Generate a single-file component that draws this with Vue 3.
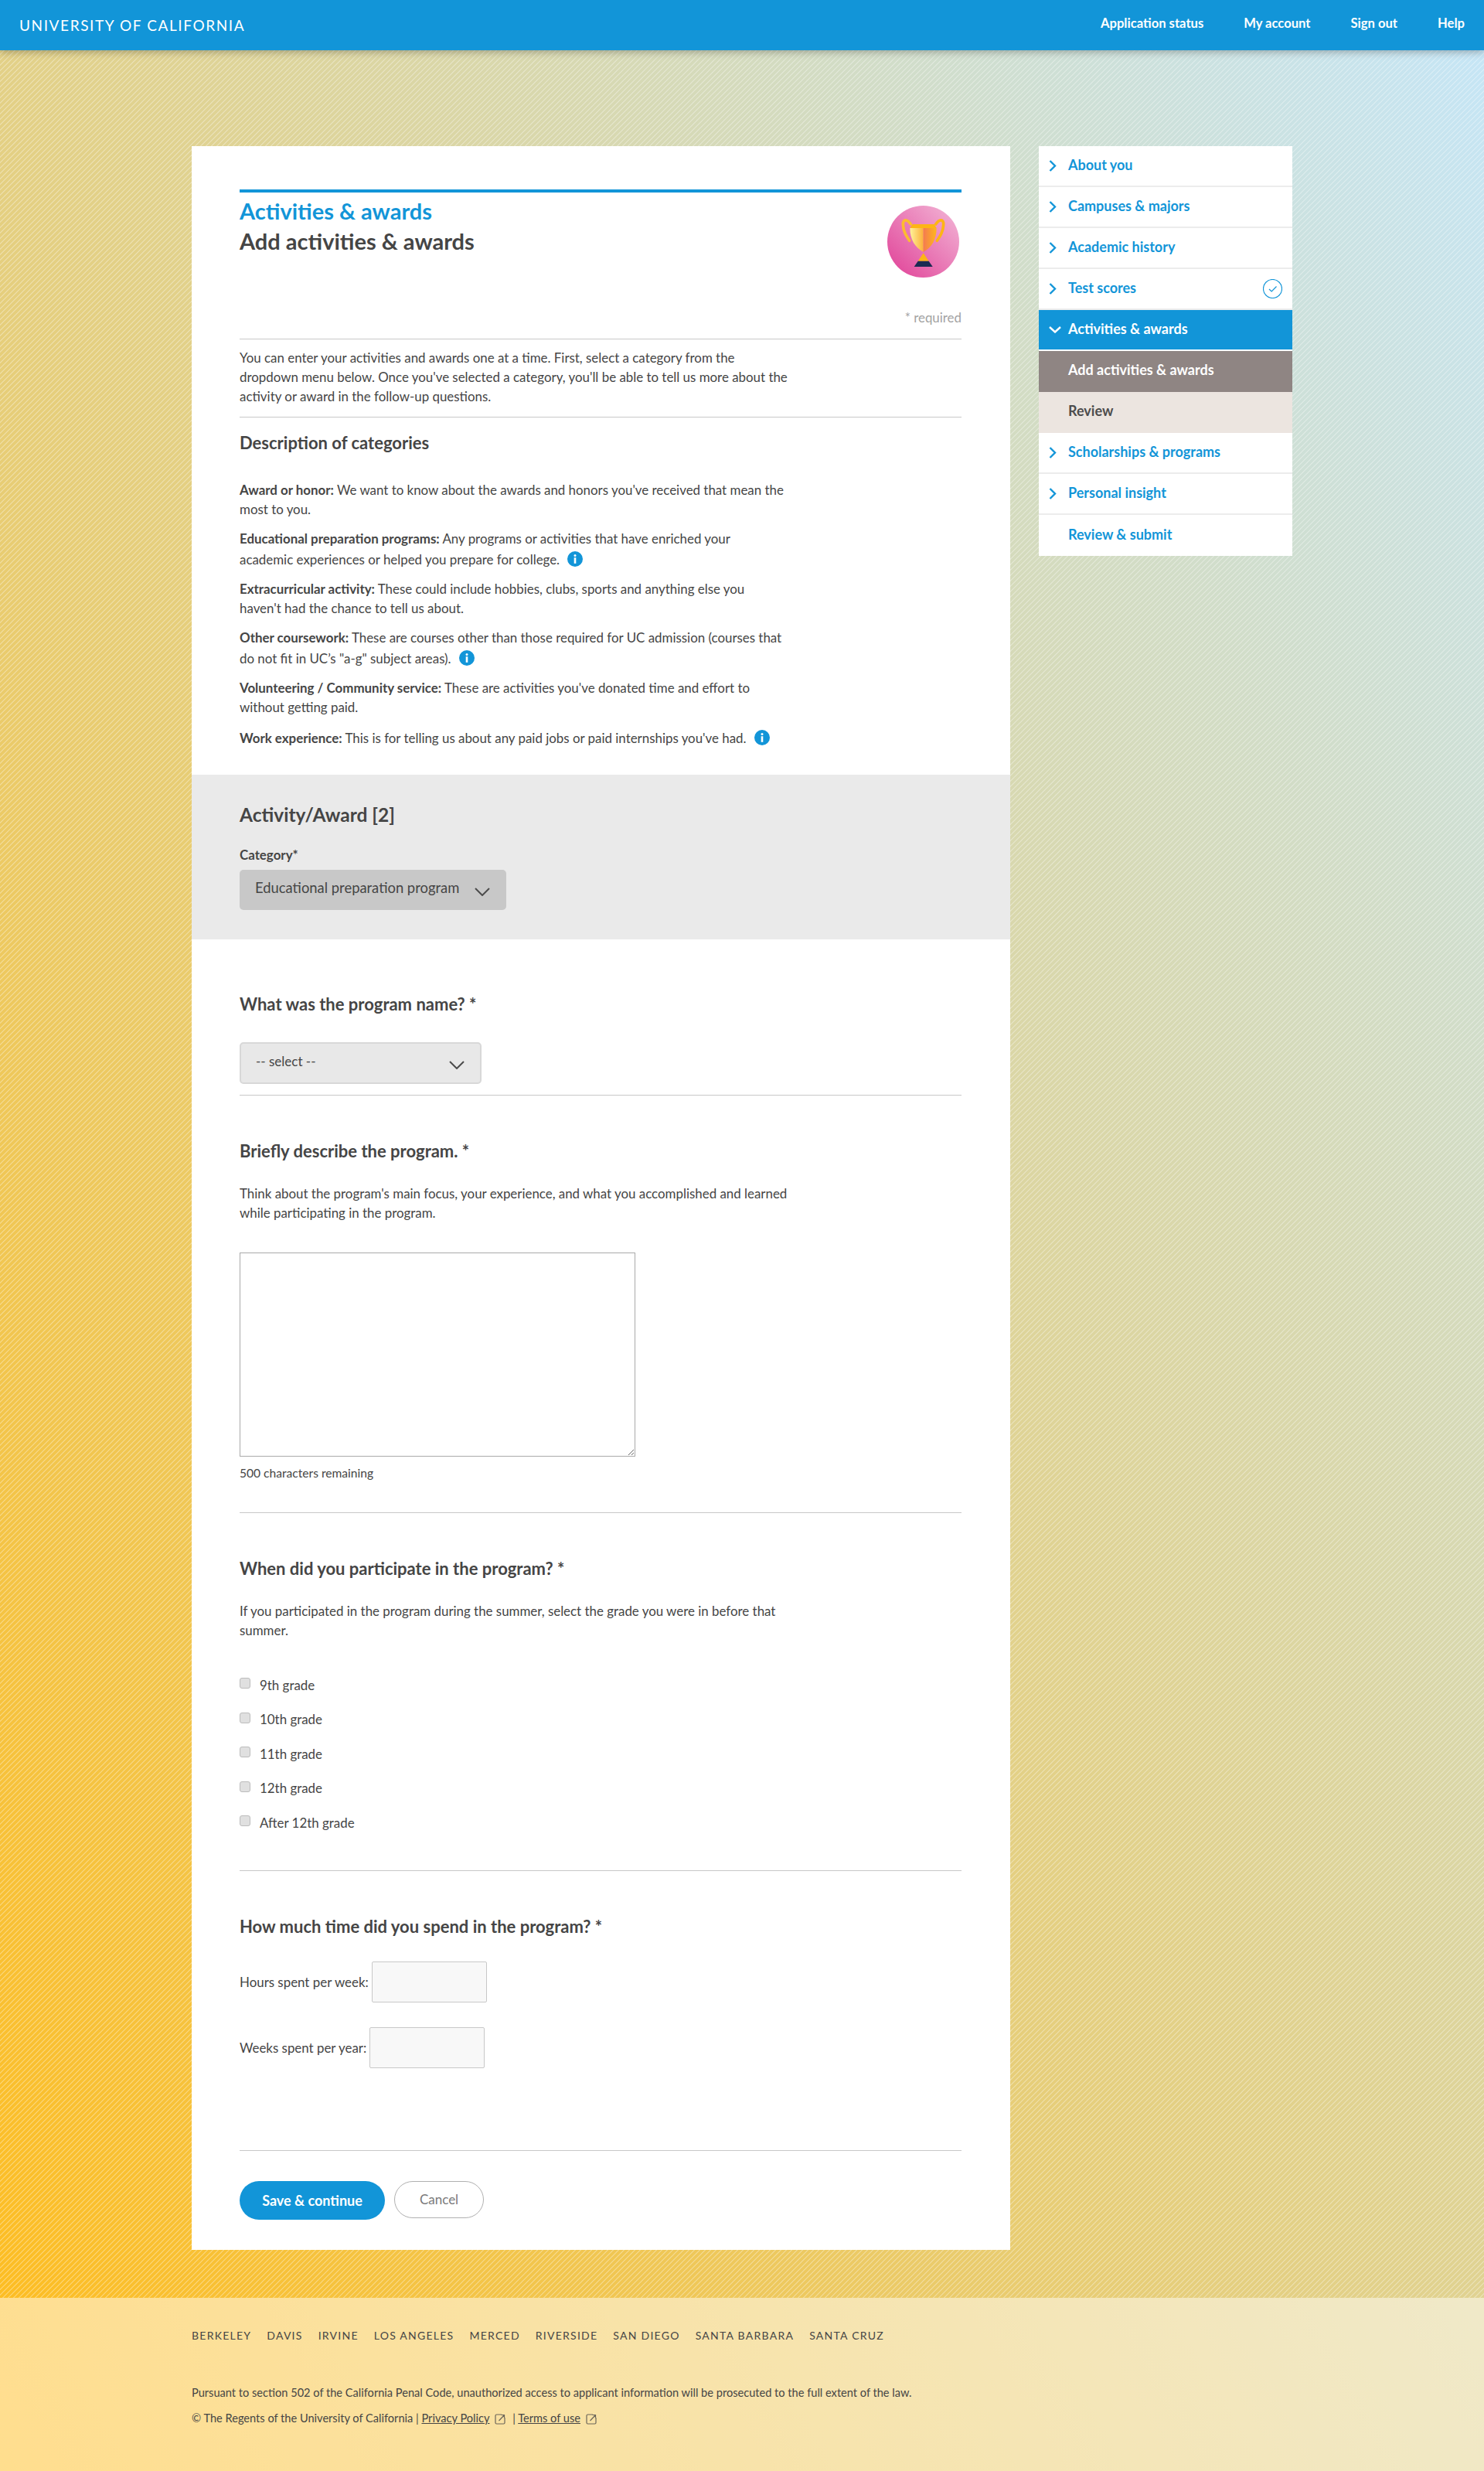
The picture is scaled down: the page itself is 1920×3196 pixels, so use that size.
<template>
  <div class="page">
    <header class="topbar">
      <div class="brand">UNIVERSITY OF CALIFORNIA</div>
      <nav class="topnav">
        <a v-for="item in topLinks" :key="item">{{ item }}</a>
      </nav>
    </header>

    <main class="main">
      <section class="card">
        <div class="inner">
          <div class="head">
            <div>
              <h1>Activities &amp; awards</h1>
              <div class="subtitle">Add activities &amp; awards</div>
            </div>
            <svg class="trophy" viewBox="84 78 279 279" width="93" height="93">
              <defs>
                <linearGradient id="disc" x1="0" y1="1" x2="1" y2="0">
                  <stop offset="0" stop-color="#e03f96" />
                  <stop offset="1" stop-color="#f3b9d8" />
                </linearGradient>
                <linearGradient id="cupL" x1="0" y1="0" x2="1" y2="0">
                  <stop offset="0" stop-color="#fff29a" />
                  <stop offset="1" stop-color="#fbb03b" />
                </linearGradient>
                <linearGradient id="cupR" x1="0" y1="0" x2="1" y2="0">
                  <stop offset="0" stop-color="#f47b50" />
                  <stop offset="1" stop-color="#ffb81c" />
                </linearGradient>
              </defs>
              <circle cx="223.5" cy="217.5" r="139.5" fill="url(#disc)" />
              <path d="M175 150C162 130 144 128 145 152C146 178 158 196 170 214" fill="none" stroke="#fdbb30" stroke-width="11" stroke-linecap="round" />
              <path d="M272 150C285 130 303 128 302 152C301 178 289 196 277 214" fill="none" stroke="#fdb515" stroke-width="11" stroke-linecap="round" />
              <polygon points="182,150 266,150 275,165 172,165" fill="#fdb515" />
              <path d="M172 165H224V258C192 240 172 210 172 165Z" fill="url(#cupL)" />
              <path d="M224 165H275C275 210 256 240 224 258Z" fill="url(#cupR)" />
              <polygon points="224,262 245,293 203,293" fill="#fdb515" />
              <polygon points="203,293 245,293 260,315 188,315" fill="#1b2a52" />
            </svg>
          </div>
          <div class="required">* required</div>

          <p class="intro">
            You can enter your activities and awards one at a time. First, select a category from the<br />
            dropdown menu below. Once you've selected a category, you'll be able to tell us more about the<br />
            activity or award in the follow-up questions.
          </p>

          <h2 class="desc-title">Description of categories</h2>
          <div class="defs">
            <p v-for="d in definitions" :key="d.term">
              <b>{{ d.term }}</b> {{ d.first }}<br v-if="d.second" />{{ d.second }}
              <svg v-if="d.info" class="info" viewBox="0 0 20 20" width="20" height="20">
                <circle cx="10" cy="10" r="10" fill="#1295d8" />
                <circle cx="10" cy="5.4" r="1.5" fill="#fff" />
                <rect x="8.7" y="8.2" width="2.6" height="7.6" fill="#fff" />
              </svg>
            </p>
          </div>
        </div>

        <div class="band">
          <h2>Activity/Award [2]</h2>
          <div class="cat-label">Category*</div>
          <div class="cat-select">
            <span>Educational preparation program</span>
            <svg viewBox="0 0 20 11" width="20" height="11"><path d="M1 1l9 9 9-9" fill="none" stroke="#4c4c4c" stroke-width="2" /></svg>
          </div>
        </div>

        <div class="inner">
          <h3 class="q first">What was the program name? *</h3>
          <div class="pick">
            <span>-- select --</span>
            <svg viewBox="0 0 20 11" width="20" height="11"><path d="M1 1l9 9 9-9" fill="none" stroke="#4c4c4c" stroke-width="2" /></svg>
          </div>
          <div class="rule r1"></div>

          <h3 class="q">Briefly describe the program. *</h3>
          <p class="hint">
            Think about the program's main focus, your experience, and what you accomplished and learned<br />
            while participating in the program.
          </p>
          <textarea class="describe"></textarea>
          <div class="remaining">500 characters remaining</div>
          <div class="rule r2"></div>

          <h3 class="q">When did you participate in the program? *</h3>
          <p class="hint">
            If you participated in the program during the summer, select the grade you were in before that<br />
            summer.
          </p>
          <div class="grades">
            <label v-for="g in grades" :key="g" class="grade">
              <input type="checkbox" />
              <span>{{ g }}</span>
            </label>
          </div>
          <div class="rule r3"></div>

          <h3 class="q">How much time did you spend in the program? *</h3>
          <div class="time t1"><span>Hours spent per week:</span><input type="text" /></div>
          <div class="time t2"><span>Weeks spent per year:</span><input type="text" /></div>
          <div class="rule r4"></div>

          <div class="actions">
            <button class="save">Save &amp; continue</button>
            <button class="cancel">Cancel</button>
          </div>
        </div>
      </section>

      <aside class="side">
        <a v-for="row in sideRows" :key="row.label" class="side-row" :class="row.kind">
          <span class="slot">
            <svg v-if="row.kind === 'open'" viewBox="0 0 16 9" width="16" height="9"><path d="M1 1l7 6.5L15 1" fill="none" stroke="#fff" stroke-width="2.4" /></svg>
            <svg v-else-if="row.arrow" viewBox="0 0 10 15" width="10" height="15"><path d="M1.5 1l6.5 6.5L1.5 14" fill="none" stroke="#1295d8" stroke-width="2.4" /></svg>
          </span>
          {{ row.label }}
          <svg v-if="row.done" class="done" viewBox="0 0 25 25" width="25" height="25">
            <circle cx="12.5" cy="12.5" r="12" fill="none" stroke="#1295d8" stroke-width="1.2" />
            <path d="M8 13l3.2 3L17.5 9.5" fill="none" stroke="#1295d8" stroke-width="1.2" />
          </svg>
        </a>
      </aside>
    </main>

    <footer class="footer">
      <div class="campuses">
        <a v-for="c in campuses" :key="c">{{ c }}</a>
      </div>
      <p class="legal">Pursuant to section 502 of the California Penal Code, unauthorized access to applicant information will be prosecuted to the full extent of the law.</p>
      <p class="legal copy">
        © The Regents of the University of California |
        <a>Privacy Policy</a>
        <svg class="ext" viewBox="0 0 14 14" width="14" height="14"><path d="M9 1H2.5A1.5 1.5 0 0 0 1 2.5v9A1.5 1.5 0 0 0 2.5 13h9a1.5 1.5 0 0 0 1.5-1.5V5M5.5 9L12.5 1.5M8.5 1.5h4v4" fill="none" stroke="#6b6559" stroke-width="1.2" /></svg>
        | <a>Terms of use</a>
        <svg class="ext" viewBox="0 0 14 14" width="14" height="14"><path d="M9 1H2.5A1.5 1.5 0 0 0 1 2.5v9A1.5 1.5 0 0 0 2.5 13h9a1.5 1.5 0 0 0 1.5-1.5V5M5.5 9L12.5 1.5M8.5 1.5h4v4" fill="none" stroke="#6b6559" stroke-width="1.2" /></svg>
      </p>
    </footer>
  </div>
</template>

<script setup>
const topLinks = ['Application status', 'My account', 'Sign out', 'Help']

const definitions = [
  { term: 'Award or honor:', first: "We want to know about the awards and honors you've received that mean the", second: 'most to you.' },
  { term: 'Educational preparation programs:', first: 'Any programs or activities that have enriched your', second: 'academic experiences or helped you prepare for college.', info: true },
  { term: 'Extracurricular activity:', first: 'These could include hobbies, clubs, sports and anything else you', second: "haven't had the chance to tell us about." },
  { term: 'Other coursework:', first: 'These are courses other than those required for UC admission (courses that', second: 'do not fit in UC’s "a-g" subject areas).', info: true },
  { term: 'Volunteering / Community service:', first: "These are activities you've donated time and effort to", second: 'without getting paid.' },
  { term: 'Work experience:', first: "This is for telling us about any paid jobs or paid internships you've had.", second: '', info: true }
]

const grades = ['9th grade', '10th grade', '11th grade', '12th grade', 'After 12th grade']

const sideRows = [
  { label: 'About you', arrow: true },
  { label: 'Campuses & majors', arrow: true },
  { label: 'Academic history', arrow: true },
  { label: 'Test scores', arrow: true, done: true },
  { label: 'Activities & awards', kind: 'open' },
  { label: 'Add activities & awards', kind: 'current' },
  { label: 'Review', kind: 'sub' },
  { label: 'Scholarships & programs', arrow: true },
  { label: 'Personal insight', arrow: true },
  { label: 'Review & submit' }
]

const campuses = ['Berkeley', 'Davis', 'Irvine', 'Los Angeles', 'Merced', 'Riverside', 'San Diego', 'Santa Barbara', 'Santa Cruz']
</script>

<style>
body {
  margin: 0;
}
</style>

<style scoped>
.page {
  height: 3196px;
  font-family: Lato, "Open Sans", sans-serif;
  font-size: 16.9px;
  line-height: 25px;
  color: #454545;
  background: linear-gradient(to top right, #ffbc1c, #c5e6f8);
  overflow: hidden;
}

.topbar {
  position: relative;
  z-index: 2;
  height: 65px;
  display: flex;
  align-items: center;
  justify-content: space-between;
  padding: 0 25px;
  background: #1295d8;
  color: #fff;
  box-shadow: 0 2px 10px rgba(0, 0, 0, 0.3);
}

.brand {
  font-size: 19px;
  letter-spacing: 1.6px;
}

.topnav {
  display: flex;
  gap: 52px;
  font-size: 16.6px;
  font-weight: 700;
  margin-top: -4px;
}

.main {
  display: flex;
  align-items: flex-start;
  gap: 37px;
  height: 2907px;
  box-sizing: border-box;
  padding: 124px 0 0 248px;
  background: repeating-linear-gradient(-45deg, rgba(255, 255, 255, 0) 0 3px, rgba(255, 255, 255, 0.28) 3px 4.9497px);
}

.card {
  width: 1059px;
  height: 2721px;
  background: #fff;
}

.inner {
  padding: 56px 63px 0 62px;
}

.inner + .band + .inner {
  padding-top: 0;
}

.head {
  display: flex;
  justify-content: space-between;
  height: 110px;
  border-top: 4px solid #1295d8;
}

h1 {
  margin: 6px 0 0;
  font-size: 29px;
  line-height: 36px;
  font-weight: 700;
  color: #1295d8;
}

.subtitle {
  margin-top: 1px;
  font-size: 29px;
  line-height: 40px;
  font-weight: 700;
}

.trophy {
  margin: 17px 3px 0 0;
}

.required {
  margin-top: 40px;
  padding-bottom: 15px;
  line-height: 24px;
  text-align: right;
  color: #a3a3a3;
  border-bottom: 1px solid #c8c8c8;
}

.intro {
  margin: 11px 0 0;
  padding-bottom: 14px;
  border-bottom: 1px solid #c8c8c8;
}

h2 {
  margin: 0;
  font-size: 24.5px;
  line-height: 30px;
  font-weight: 700;
}

.desc-title {
  margin-top: 18px;
  font-size: 22px;
}

.defs {
  margin-top: 33px;
  padding-bottom: 35px;
}

.defs p {
  margin: 0 0 13px;
}

.defs p:last-child {
  margin-bottom: 0;
}

.info {
  margin: 4px 0 0 6px;
  vertical-align: -3px;
}

.band {
  height: 213px;
  box-sizing: border-box;
  padding: 37px 62px 0;
  background: #eaeaea;
}

.cat-label {
  margin-top: 25px;
  line-height: 24px;
  font-weight: 700;
}

.cat-select {
  display: flex;
  align-items: center;
  justify-content: space-between;
  width: 345px;
  height: 52px;
  margin-top: 7px;
  padding: 0 21px 0 20px;
  box-sizing: border-box;
  background: #c8c8c8;
  border-radius: 5px;
  font-size: 18.4px;
}

.cat-select span,
.pick span {
  margin-top: -5px;
}

.cat-select svg,
.pick svg {
  margin-top: 4px;
}

.q {
  margin: 57px 0 0;
  font-size: 22px;
  line-height: 30px;
  font-weight: 700;
}

.q.first {
  margin-top: 69px;
}

.pick {
  display: flex;
  align-items: center;
  justify-content: space-between;
  width: 313px;
  height: 54px;
  margin-top: 34px;
  padding: 0 20px 0 19px;
  box-sizing: border-box;
  background: #e8e8e8;
  border: 2px solid #d8d8d8;
  border-radius: 5px;
  font-size: 17px;
}

.rule {
  height: 1px;
  background: #c8c8c8;
}

.r1 {
  margin-top: 14px;
}

.r2 {
  margin-top: 41px;
}

.r3 {
  margin-top: 39px;
}

.r4 {
  margin-top: 106px;
}

.hint {
  margin: 27px 0 0;
}

.describe {
  display: block;
  width: 512px;
  height: 264px;
  margin-top: 39px;
  padding: 4px;
  box-sizing: border-box;
  border: 1px solid #a9a9a9;
  background: #fff;
}

.remaining {
  margin-top: 11px;
  font-size: 15.6px;
  line-height: 20px;
}

.grades {
  margin-top: 36px;
}

.grade {
  display: flex;
  align-items: center;
  height: 44.5px;
}

.grade input {
  appearance: none;
  width: 14px;
  height: 14px;
  margin: -4px 12px 0 0;
  box-sizing: border-box;
  background: #e0e0e0;
  border: 1px solid #bcbcbc;
  border-radius: 3px;
}

.time {
  display: flex;
  align-items: center;
  gap: 4px;
}

.t1 {
  margin-top: 30px;
}

.t2 {
  margin-top: 32px;
}

.time input {
  width: 149px;
  height: 53px;
  padding: 0 6px;
  box-sizing: border-box;
  background: #f8f8f8;
  border: 1px solid #c8c8c8;
  border-radius: 2px;
}

.actions {
  display: flex;
  align-items: flex-start;
  gap: 12px;
  margin-top: 39px;
}

button {
  font-family: inherit;
  font-size: 17px;
  padding: 0;
  border-radius: 25px;
}

.save {
  width: 188px;
  height: 50px;
  border: 0;
  background: #1295d8;
  color: #fff;
  font-size: 18px;
  font-weight: 700;
}

.cancel {
  width: 116px;
  height: 48px;
  border: 1px solid #b0b0b0;
  background: #fff;
  color: #7a7a7a;
}

.side {
  width: 328px;
  font-size: 18px;
  font-weight: 700;
  color: #1295d8;
  background: #fff;
}

.side-row {
  display: flex;
  align-items: center;
  height: 53px;
  padding-bottom: 3px;
  box-sizing: border-box;
  border-bottom: 2px solid #ececec;
}

.side-row:last-child {
  border-bottom: 0;
}

.slot {
  display: flex;
  flex: none;
  width: 25px;
  margin-left: 13px;
  padding-top: 3px;
}

.open {
  background: #1295d8;
  color: #fff;
  border-bottom-color: #fff;
}

.current {
  background: #8f8583;
  color: #fff;
  border-bottom-color: #8f8583;
}

.sub {
  background: #ece5e0;
  color: #4c4c4c;
  border-bottom-color: #ece5e0;
}

.done {
  margin: 3px 13px 0 auto;
}

.footer {
  height: 224px;
  box-sizing: border-box;
  padding: 39px 0 0 248px;
  background: rgba(255, 255, 255, 0.5);
  font-size: 14.6px;
  line-height: 20px;
}

.campuses {
  display: flex;
  gap: 20px;
  font-size: 14px;
  text-transform: uppercase;
  letter-spacing: 1.25px;
}

.legal {
  margin: 54px 0 0;
}

.copy {
  margin-top: 13px;
}

.copy a {
  text-decoration: underline;
}

.ext {
  margin: 0 5px 0 7px;
  vertical-align: -3px;
}
</style>
